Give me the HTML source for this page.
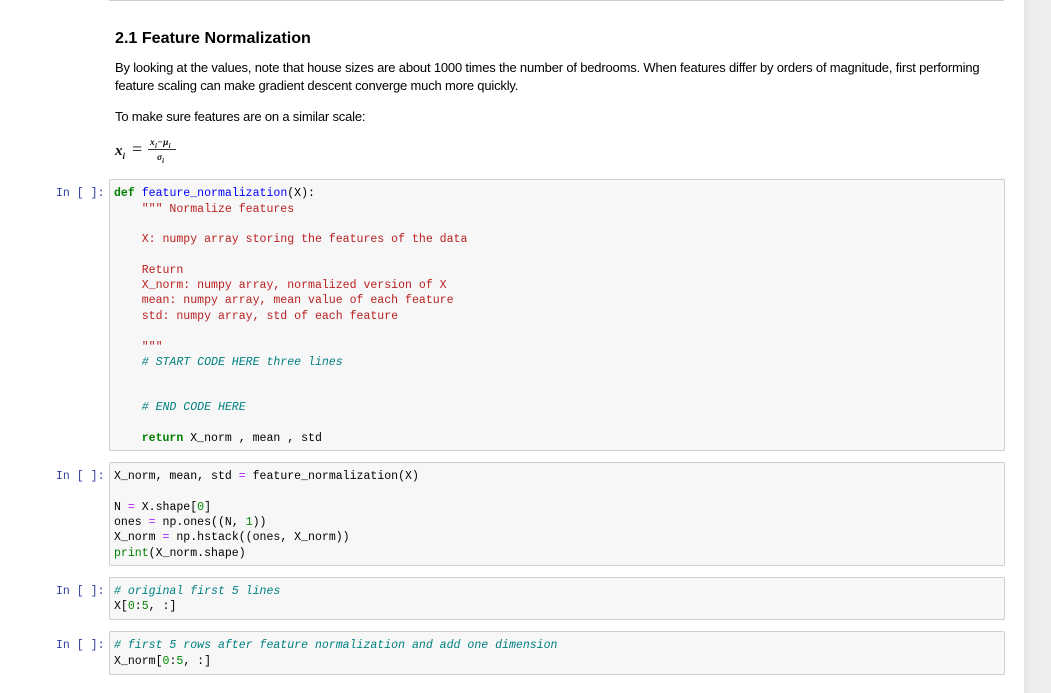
<!DOCTYPE html>
<html><head><meta charset="utf-8"><style>
html,body{margin:0;padding:0;width:1051px;height:693px;overflow:hidden;background:#fff}
.a{position:absolute;white-space:pre;line-height:16px}
.t{font-family:"Liberation Sans",sans-serif;font-size:13px;color:#000;left:115px;letter-spacing:-.185px}
.c{font-family:"Liberation Mono",monospace;font-size:11.55px;color:#000;left:114px}
.box{position:absolute;left:109px;width:894px;background:#f7f7f7;border:1px solid #cfcfcf;border-radius:2px}
.p{font-family:"Liberation Mono",monospace;font-size:11.55px;color:#303f9f;left:56px}
.k{color:#008000;font-weight:bold}.f{color:#00f}.s{color:#ba2121}.h{color:#008080;font-style:italic}.o{color:#aa22ff}.n{color:#080}.b{color:#008000}
.m{font-family:"Liberation Serif",serif;font-style:italic;color:#111}
</style></head><body>
<div style="position:absolute;left:1024px;top:0;width:27px;height:693px;background:linear-gradient(90deg,#e6e6e6,#eeeeee 30%,#eeeeee)"></div>
<div style="position:absolute;left:109px;top:0;width:895px;height:1px;background:#cfcfcf"></div>
<div class="a" style="left:115px;top:29px;font:bold 16.1px/18px 'Liberation Sans',sans-serif;color:#000">2.1 Feature Normalization</div>
<div class="a t" style="top:60px">By looking at the values, note that house sizes are about 1000 times the number of bedrooms. When features differ by orders of magnitude, first performing</div>
<div class="a t" style="top:78px">feature scaling can make gradient descent converge much more quickly.</div>
<div class="a t" style="top:109px">To make sure features are on a similar scale:</div>
<div class="a m" style="left:115px;top:143px;font-size:15px;font-weight:bold">x<sub style="font-size:9px;line-height:0">i</sub></div>
<div class="a" style="left:132px;top:141px;font:18px/16px 'Liberation Serif',serif;color:#111">=</div>
<div class="a m" style="left:150px;top:137px;font-size:9.5px;line-height:12px;font-weight:bold;letter-spacing:.2px">x<sub style="font-size:7px;line-height:0">i</sub>−μ<sub style="font-size:7px;line-height:0">i</sub></div>
<div style="position:absolute;left:148px;top:149px;width:28px;height:1px;background:#333"></div>
<div class="a m" style="left:157px;top:152px;font-size:9.5px;line-height:12px;font-weight:bold">σ<sub style="font-size:7px;line-height:0">i</sub></div>

<div class="box" style="top:179px;height:270px"></div>
<div class="box" style="top:462px;height:102px"></div>
<div class="box" style="top:577px;height:41px"></div>
<div class="box" style="top:631px;height:42px"></div>

<div class="a p" style="top:186px">In [ ]:</div>
<div class="a p" style="top:469px">In [ ]:</div>
<div class="a p" style="top:584px">In [ ]:</div>
<div class="a p" style="top:638px">In [ ]:</div>

<div class="a c" style="top:186px"><span class="k">def</span> <span class="f">feature_normalization</span>(X):</div>
<div class="a c s" style="top:202px">    """ Normalize features</div>
<div class="a c s" style="top:232px">    X: numpy array storing the features of the data</div>
<div class="a c s" style="top:263px">    Return</div>
<div class="a c s" style="top:278px">    X_norm: numpy array, normalized version of X</div>
<div class="a c s" style="top:293px">    mean: numpy array, mean value of each feature</div>
<div class="a c s" style="top:309px">    std: numpy array, std of each feature</div>
<div class="a c s" style="top:340px">    """</div>
<div class="a c h" style="top:355px">    # START CODE HERE three lines</div>
<div class="a c h" style="top:400px">    # END CODE HERE</div>
<div class="a c" style="top:431px">    <span class="k">return</span> X_norm , mean , std</div>

<div class="a c" style="top:469px">X_norm, mean, std <span class="o">=</span> feature_normalization(X)</div>
<div class="a c" style="top:500px">N <span class="o">=</span> X.shape[<span class="n">0</span>]</div>
<div class="a c" style="top:515px">ones <span class="o">=</span> np.ones((N, <span class="n">1</span>))</div>
<div class="a c" style="top:530px">X_norm <span class="o">=</span> np.hstack((ones, X_norm))</div>
<div class="a c" style="top:546px"><span class="b">print</span>(X_norm.shape)</div>

<div class="a c h" style="top:584px"># original first 5 lines</div>
<div class="a c" style="top:599px">X[<span class="n">0</span>:<span class="n">5</span>, :]</div>
<div class="a c h" style="top:638px"># first 5 rows after feature normalization and add one dimension</div>
<div class="a c" style="top:654px">X_norm[<span class="n">0</span>:<span class="n">5</span>, :]</div>
</body></html>
